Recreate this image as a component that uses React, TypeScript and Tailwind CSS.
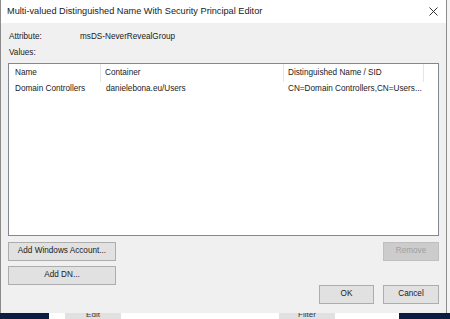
import React from "react";

const font = { fontFamily: '"Liberation Sans", Arial, sans-serif' };

function Btn({ children, className = "" }: { children: React.ReactNode; className?: string }) {
  return (
    <div
      className={`flex items-center justify-center whitespace-nowrap border border-[#adadad] bg-[#e1e1e1] text-[8.2px] text-[#1a1a1a] ${className}`}
    >
      {children}
    </div>
  );
}

export default function App() {
  return (
    <div className="flex h-[319px] w-[450px] flex-col overflow-hidden bg-white" style={font}>
      <div className="flex h-[313px] w-[450px]">
        {/* Dialog */}
        <div className="flex h-[313px] w-[447px] flex-col border-x border-[#8c8c8c] bg-[#f0f0f0]">
          {/* Title bar */}
          <div className="flex h-[23px] shrink-0 items-center justify-between bg-white pl-[6px] pr-[8px]">
            <span className="whitespace-nowrap text-[9.2px] text-[#1a1a1a]">
              Multi-valued Distinguished Name With Security Principal Editor
            </span>
            <svg width="9" height="9" viewBox="0 0 9 9">
              <path d="M0.5 0.5 L8.5 8.5 M8.5 0.5 L0.5 8.5" stroke="#333" strokeWidth="1" />
            </svg>
          </div>
          {/* Body */}
          <div className="flex flex-1 flex-col whitespace-nowrap px-[7px] text-[8.2px] text-[#1a1a1a]">
            <div className="mt-[6px] flex h-[16px] items-center">
              <span className="w-[72px] pl-[1px]">Attribute:</span>
              <span>msDS-NeverRevealGroup</span>
            </div>
            <div className="flex h-[16px] items-center pl-[1px]">Values:</div>
            <div className="mt-[2px] h-[173px] border border-[#828790] bg-white">
              <div className="flex h-[18px] items-center">
                <div className="flex h-full w-[92px] items-center border-r border-[#e5e5e5] pl-[6px]">Name</div>
                <div className="flex h-full w-[183px] items-center border-r border-[#e5e5e5] pl-[4px]">Container</div>
                <div className="flex h-full w-[140px] items-center border-r border-[#e5e5e5] pl-[4px]">
                  Distinguished Name / SID
                </div>
              </div>
              <div className="flex h-[15px] items-center">
                <div className="w-[92px] pl-[6px]">Domain Controllers</div>
                <div className="w-[183px] pl-[5px]">danielebona.eu/Users</div>
                <div className="w-[140px] pl-[4px]">CN=Domain Controllers,CN=Users...</div>
              </div>
            </div>
            <div className="mt-[6px] flex justify-between">
              <Btn className="h-[19px] w-[108px]">Add Windows Account...</Btn>
              <div className="flex h-[19px] w-[56px] items-center justify-center border border-[#bfbfbf] bg-[#cccccc] text-[#a0a0a0]">
                Remove
              </div>
            </div>
            <div className="mt-[5px] flex">
              <Btn className="h-[19px] w-[108px]">Add DN...</Btn>
            </div>
            <div className="flex justify-end gap-[9px]">
              <Btn className="h-[19px] w-[55px] border-[#0078d7]">OK</Btn>
              <Btn className="h-[19px] w-[56px]">Cancel</Btn>
            </div>
          </div>
        </div>
        <div className="h-full w-[3px] bg-[#f4f4f4]" />
      </div>
      {/* background strip */}
      <div className="flex h-[6px] text-[8px]">
        <div className="w-[49px] bg-[#0b1e3d]" />
        <div className="w-[16px] bg-white" />
        <div className="w-[56px] overflow-hidden bg-[#e1e1e1] text-center leading-[3px] text-[#333]">Edit</div>
        <div className="w-[158px] bg-white" />
        <div className="w-[56px] overflow-hidden bg-[#e1e1e1] text-center leading-[3px] text-[#333]">Filter</div>
        <div className="w-[64px] bg-white" />
        <div className="flex-1 bg-[#0b1e3d]" />
      </div>
    </div>
  );
}
